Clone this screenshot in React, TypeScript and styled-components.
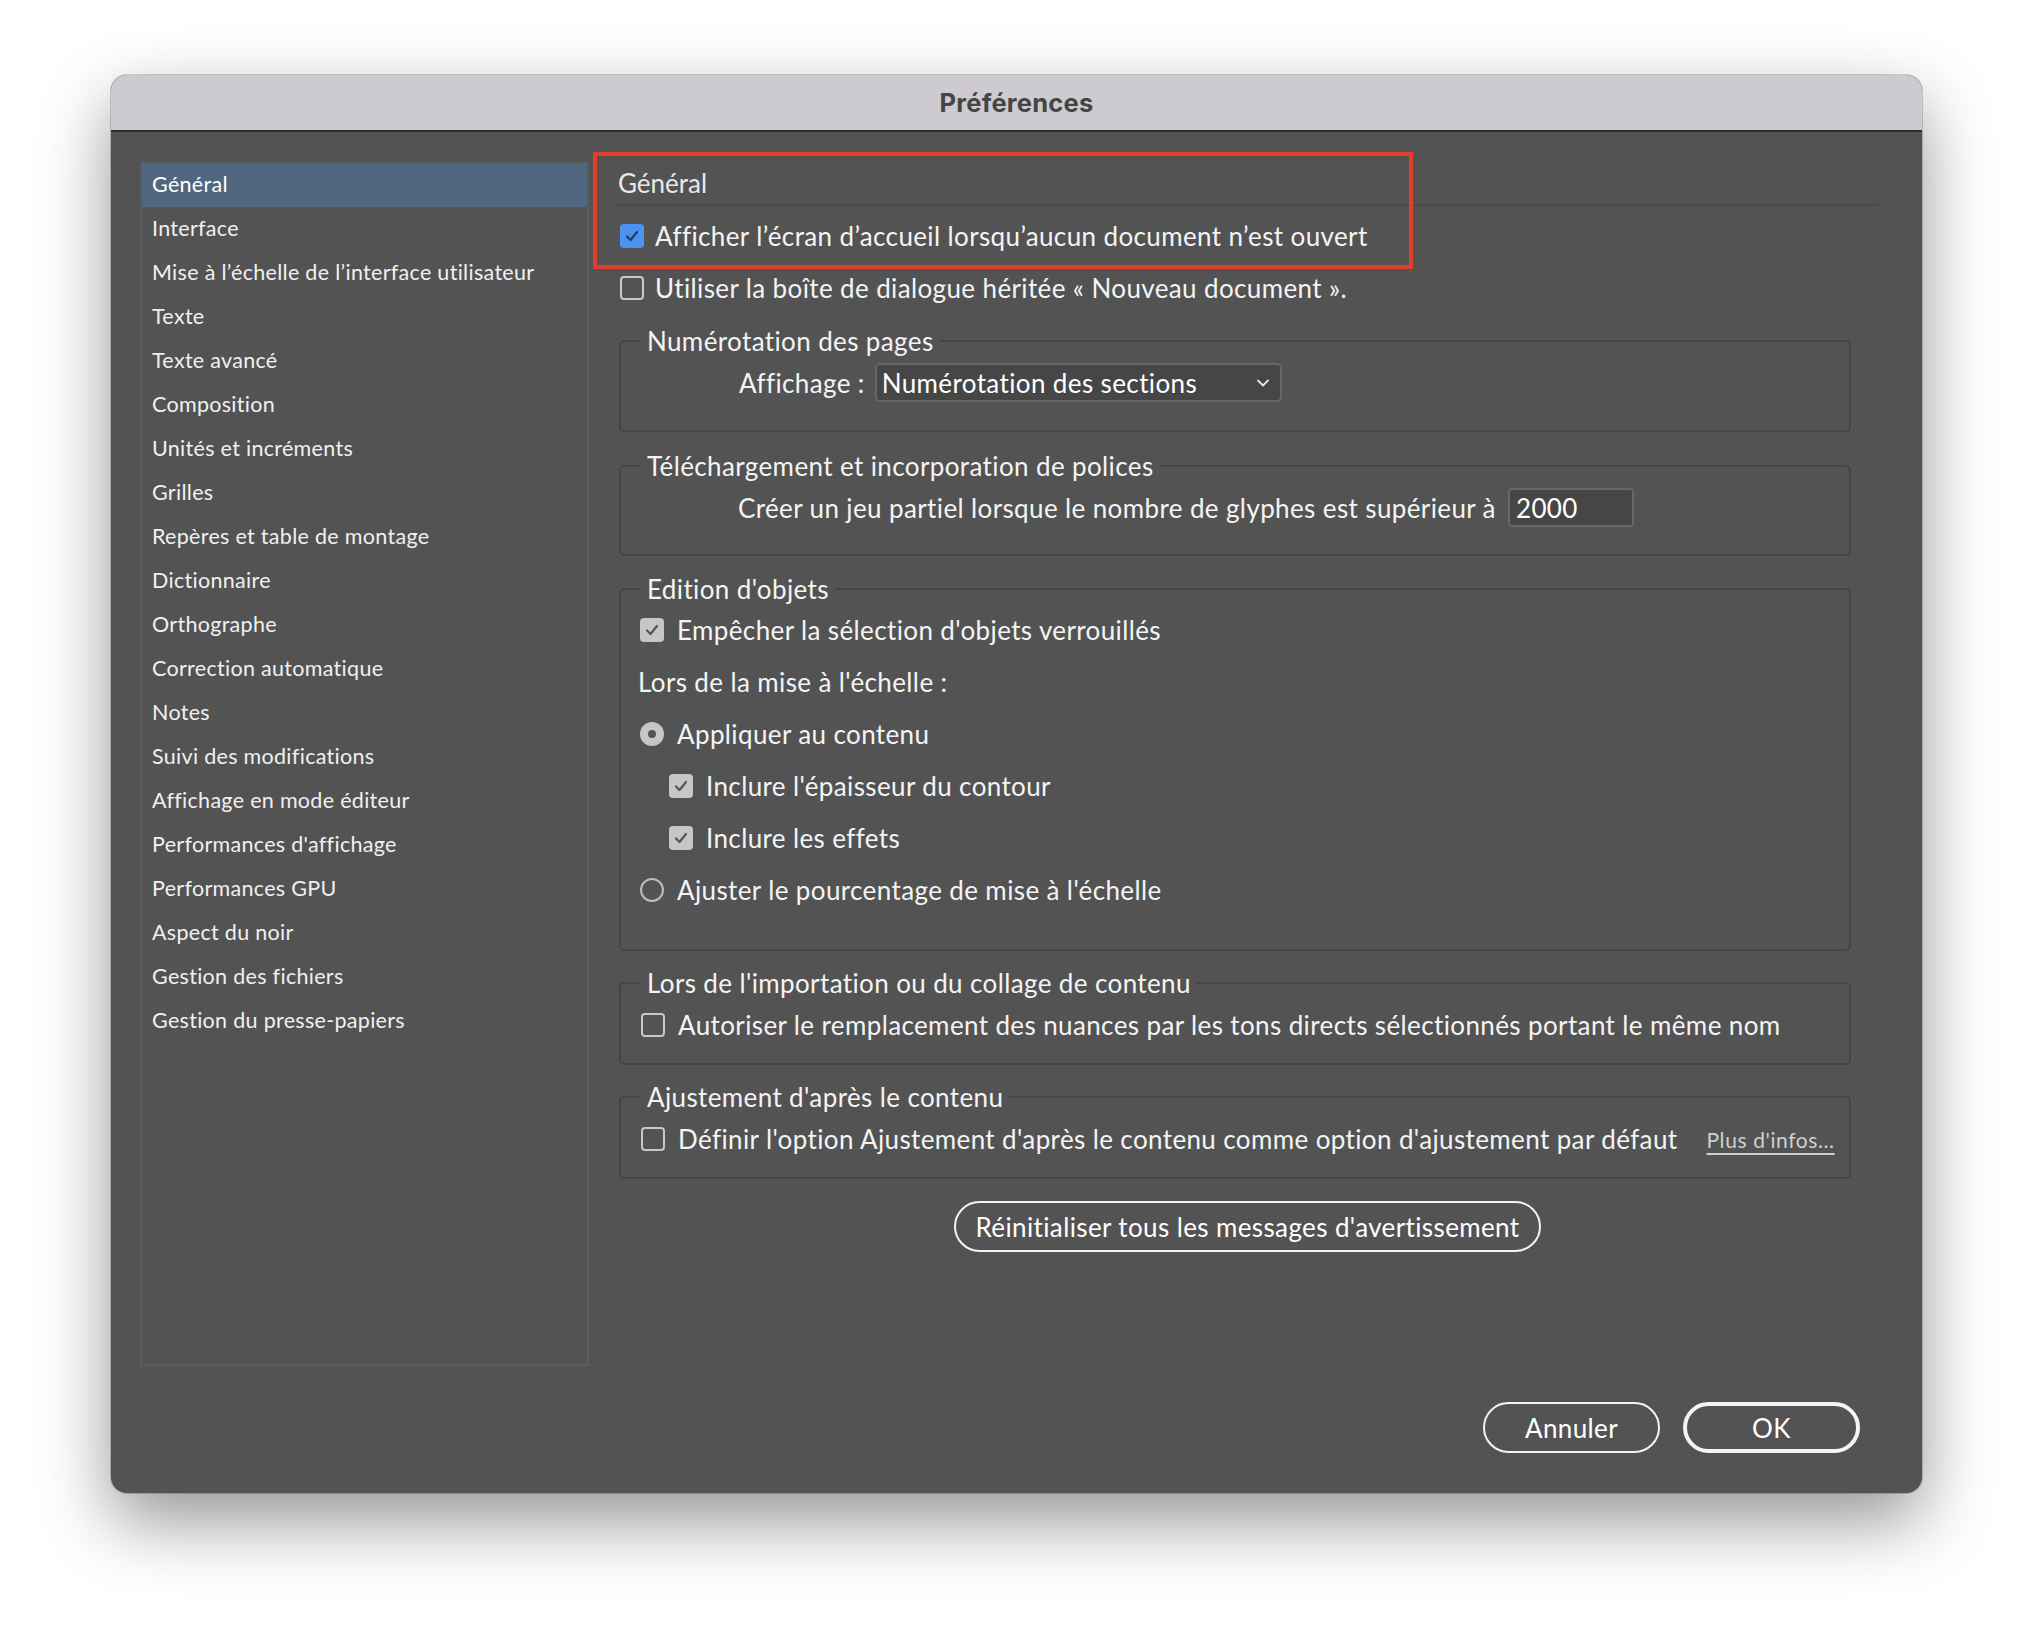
import React from "react";
import styled, { createGlobalStyle, css } from "styled-components";

const GlobalStyle = createGlobalStyle`
  html, body { margin: 0; padding: 0; background: #ffffff; }
  body {
    width: 2034px;
    height: 1642px;
    font-family: Lato, "Open Sans", "Noto Sans", sans-serif;
    -webkit-font-smoothing: antialiased;
  }
  * { box-sizing: border-box; }
`;

const Page = styled.div`
  padding: 75px 0 0 111px;
`;

const Window = styled.div`
  position: relative;
  width: 1811px;
  height: 1418px;
  background: #535353;
  border-radius: 16px;
  overflow: hidden;
  display: flex;
  flex-direction: column;
  box-shadow: 0 28px 70px rgba(0, 0, 0, 0.42), 0 0 0 1px rgba(0, 0, 0, 0.18);
`;

const TitleBar = styled.div`
  height: 57px;
  flex: none;
  background: #cdcad0;
  border-bottom: 2px solid #2d2d2d;
  display: flex;
  align-items: center;
  justify-content: center;
  font-family: Inter, "Liberation Sans", sans-serif;
  font-weight: 700;
  font-size: 25.5px;
  color: #454545;
  letter-spacing: 0.2px;
`;

const Content = styled.div`
  display: flex;
  padding: 29px 44px 0 29px;
`;

const Sidebar = styled.div`
  width: 449px;
  height: 1205px;
  flex: none;
  border: 2px solid #5c5c5c;
  border-top-color: #585858;
`;

const NavItem = styled.div<{ $active?: boolean }>`
  height: 44px;
  line-height: 43px;
  padding-left: 10px;
  font-size: 21.5px;
  letter-spacing: 0.3px;
  color: #f0f0f0;
  white-space: nowrap;
  ${(p) =>
    p.$active &&
    css`
      background: #51667f;
      color: #ffffff;
    `}
`;

const Main = styled.div`
  flex: 1;
  margin-left: 28px;
  display: flex;
  flex-direction: column;
  color: #f4f4f4;
  font-size: 26px;
  letter-spacing: 0.38px;
`;

const Header = styled.div`
  height: 45px;
  line-height: 44px;
  padding-left: 1px;
  font-size: 26px;
  letter-spacing: 0;
  color: #e8e8e8;
  border-bottom: 2px solid #4a4a4a;
`;

const Row = styled.div<{ $mt?: number; $indent?: number; $gap?: number }>`
  display: flex;
  align-items: center;
  height: 40px;
  margin-top: ${(p) => p.$mt ?? 0}px;
  padding-left: ${(p) => p.$indent ?? 0}px;
  gap: ${(p) => p.$gap ?? 13}px;
  white-space: nowrap;
`;

const TallRow = styled(Row)`
  height: 39px;
`;

const Box = styled.span<{ $variant: "blue" | "gray" | "empty" }>`
  width: 24px;
  height: 24px;
  flex: none;
  border-radius: 4px;
  display: inline-flex;
  align-items: center;
  justify-content: center;
  ${(p) =>
    p.$variant === "blue"
      ? css`
          background: #4a93f0;
        `
      : p.$variant === "gray"
      ? css`
          background: #c6c6c6;
        `
      : css`
          border: 2px solid #c8c8c8;
        `}
`;

const Radio = styled.span<{ $on?: boolean }>`
  width: 24px;
  height: 24px;
  flex: none;
  border-radius: 50%;
  display: inline-flex;
  align-items: center;
  justify-content: center;
  ${(p) =>
    p.$on
      ? css`
          background: #c6c6c6;
        `
      : css`
          border: 2px solid #bdbdbd;
        `}
`;

const Dot = styled.span`
  width: 8px;
  height: 8px;
  border-radius: 50%;
  background: #555555;
`;

const Group = styled.fieldset<{ $mt?: number }>`
  margin: ${(p) => p.$mt ?? 18}px 27px 0 2px;
  padding: 0;
  border: 2px solid #454545;
  border-radius: 5px;
  min-width: 0;
`;

const Legend = styled.legend`
  margin-left: 20px;
  padding: 0 6px;
  font-size: 26px;
  line-height: 30px;
  color: #f4f4f4;
`;

const GroupBody = styled.div<{ $pt?: number; $pb?: number; $pl?: number }>`
  display: flex;
  flex-direction: column;
  gap: 12px;
  padding: ${(p) => p.$pt ?? 7}px 0 ${(p) => p.$pb ?? 18}px ${(p) => p.$pl ?? 19}px;
`;

const Select = styled.div`
  width: 407px;
  height: 39px;
  background: #464646;
  border: 2px solid #676767;
  border-radius: 5px;
  display: flex;
  align-items: center;
  justify-content: space-between;
  padding: 0 10px 0 5px;
  color: #ffffff;
`;

const NumberInput = styled.div`
  width: 126px;
  height: 39px;
  background: #464646;
  border: 2px solid #676767;
  border-radius: 4px;
  display: flex;
  align-items: center;
  padding-left: 6px;
  color: #ffffff;
`;

const Label = styled.span<{ $ml?: number }>`
  margin-left: ${(p) => p.$ml ?? 0}px;
`;

const MoreLink = styled.span`
  margin-left: 16px;
  font-size: 21px;
  letter-spacing: 0.6px;
  color: #cfcfcf;
  text-decoration: underline;
  text-underline-offset: 5px;
`;

const PillButton = styled.button<{ $bold?: boolean; $width?: number }>`
  height: 51px;
  width: ${(p) => (p.$width ? `${p.$width}px` : "auto")};
  padding: 0 19px;
  background: transparent;
  color: #ffffff;
  font-family: Lato, "Open Sans", sans-serif;
  font-size: 26px;
  letter-spacing: 0.38px;
  border: ${(p) => (p.$bold ? 4 : 2)}px solid #f4f4f4;
  border-radius: 26px;
  white-space: nowrap;
`;

const ResetWrap = styled.div`
  display: flex;
  justify-content: center;
  margin-top: 22px;
`;

const Footer = styled.div`
  display: flex;
  justify-content: flex-end;
  gap: 23px;
  padding: 36px 62px 0 0;
`;

const Annotation = styled.div`
  position: absolute;
  left: 482px;
  top: 77px;
  width: 820px;
  height: 117px;
  border: 4px solid #e3402b;
  pointer-events: none;
`;

const Check = ({ color }: { color: string }) => (
  <svg width="16" height="16" viewBox="0 0 16 16">
    <polyline points="3,8.5 6.5,12 13,4" fill="none" stroke={color} strokeWidth="2.2" strokeLinecap="round" strokeLinejoin="round" />
  </svg>
);

const Chevron = () => (
  <svg width="14" height="10" viewBox="0 0 14 10">
    <polyline points="2,2.5 7,7.5 12,2.5" fill="none" stroke="#e6e6e6" strokeWidth="1.8" strokeLinecap="round" strokeLinejoin="round" />
  </svg>
);

const navItems = [
  "Général",
  "Interface",
  "Mise à l’échelle de l’interface utilisateur",
  "Texte",
  "Texte avancé",
  "Composition",
  "Unités et incréments",
  "Grilles",
  "Repères et table de montage",
  "Dictionnaire",
  "Orthographe",
  "Correction automatique",
  "Notes",
  "Suivi des modifications",
  "Affichage en mode éditeur",
  "Performances d'affichage",
  "Performances GPU",
  "Aspect du noir",
  "Gestion des fichiers",
  "Gestion du presse-papiers",
];

export default function App() {
  return (
    <>
      <GlobalStyle />
      <Page>
        <Window>
          <TitleBar>Préférences</TitleBar>
          <Content>
            <Sidebar>
              {navItems.map((n, i) => (
                <NavItem key={n} $active={i === 0}>
                  {n}
                </NavItem>
              ))}
            </Sidebar>
            <Main>
              <Header>Général</Header>
              <Row $mt={10} $indent={3} $gap={11}>
                <Box $variant="blue">
                  <Check color="#1f3d66" />
                </Box>
                Afficher l’écran d’accueil lorsqu’aucun document n’est ouvert
              </Row>
              <Row $mt={12} $indent={3} $gap={11}>
                <Box $variant="empty" />
                Utiliser la boîte de dialogue héritée « Nouveau document ».
              </Row>

              <Group>
                <Legend>Numérotation des pages</Legend>
                <GroupBody $pb={28} $pl={118}>
                  <TallRow $gap={10}>
                    <Label>Affichage :</Label>
                    <Select>
                      <span>Numérotation des sections</span>
                      <Chevron />
                    </Select>
                  </TallRow>
                </GroupBody>
              </Group>

              <Group $mt={19}>
                <Legend>Téléchargement et incorporation de polices</Legend>
                <GroupBody $pb={27} $pl={117}>
                  <TallRow $gap={12}>
                    <Label>Créer un jeu partiel lorsque le nombre de glyphes est supérieur à</Label>
                    <NumberInput>2000</NumberInput>
                  </TallRow>
                </GroupBody>
              </Group>

              <Group>
                <Legend>Edition d'objets</Legend>
                <GroupBody $pt={6} $pb={39}>
                  <Row>
                    <Box $variant="gray">
                      <Check color="#555555" />
                    </Box>
                    Empêcher la sélection d'objets verrouillés
                  </Row>
                  <Row>
                    <Label $ml={-2}>Lors de la mise à l'échelle :</Label>
                  </Row>
                  <Row>
                    <Radio $on>
                      <Dot />
                    </Radio>
                    Appliquer au contenu
                  </Row>
                  <Row $indent={29}>
                    <Box $variant="gray">
                      <Check color="#555555" />
                    </Box>
                    Inclure l'épaisseur du contour
                  </Row>
                  <Row $indent={29}>
                    <Box $variant="gray">
                      <Check color="#555555" />
                    </Box>
                    Inclure les effets
                  </Row>
                  <Row>
                    <Radio />
                    Ajuster le pourcentage de mise à l'échelle
                  </Row>
                </GroupBody>
              </Group>

              <Group $mt={17}>
                <Legend>Lors de l'importation ou du collage de contenu</Legend>
                <GroupBody $pl={20}>
                  <Row>
                    <Box $variant="empty" />
                    Autoriser le remplacement des nuances par les tons directs sélectionnés portant le même nom
                  </Row>
                </GroupBody>
              </Group>

              <Group $mt={17}>
                <Legend>Ajustement d'après le contenu</Legend>
                <GroupBody $pl={20}>
                  <Row>
                    <Box $variant="empty" />
                    Définir l'option Ajustement d'après le contenu comme option d'ajustement par défaut
                    <MoreLink>Plus d'infos...</MoreLink>
                  </Row>
                </GroupBody>
              </Group>

              <ResetWrap>
                <PillButton>Réinitialiser tous les messages d'avertissement</PillButton>
              </ResetWrap>
            </Main>
          </Content>
          <Footer>
            <PillButton $width={177}>Annuler</PillButton>
            <PillButton $width={177} $bold>
              OK
            </PillButton>
          </Footer>
          <Annotation />
        </Window>
      </Page>
    </>
  );
}
